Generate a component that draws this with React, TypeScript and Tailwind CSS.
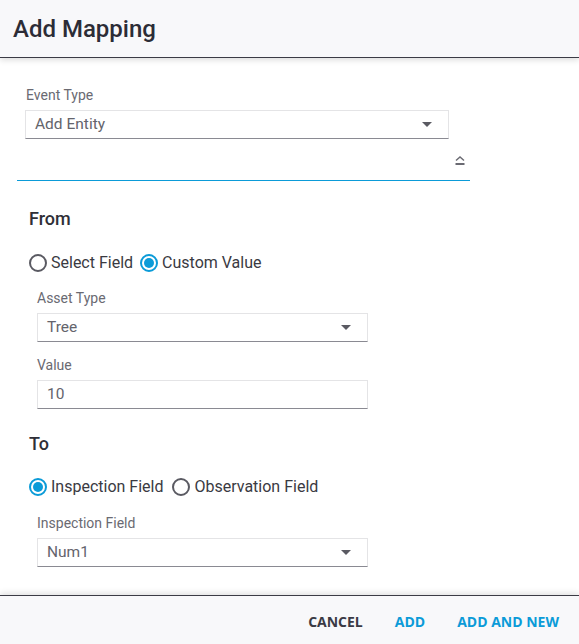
import React from "react";

const Caret = () => (
  <svg width="10" height="5" viewBox="0 0 10 5" className="shrink-0">
    <path d="M0 0 L10 0 L5 5 Z" fill="#5a5a62" />
  </svg>
);

const Select = ({ value, w }: { value: string; w: string }) => (
  <div
    className={`${w} h-[29px] flex items-center justify-between pl-[9px] pr-[16px] border border-[#e4e4e6] border-b-[#8a8a92] bg-white`}
  >
    <span className="text-[15.5px] text-[#64646c]">{value}</span>
    <Caret />
  </div>
);

const Radio = ({ checked, label }: { checked: boolean; label: string }) => (
  <label className="flex items-center gap-[4px]">
    {checked ? (
      <span className="w-[18px] h-[18px] rounded-full border-2 border-[#0b9bd8] flex items-center justify-center">
        <span className="w-[10px] h-[10px] rounded-full bg-[#0b9bd8]" />
      </span>
    ) : (
      <span className="w-[18px] h-[18px] rounded-full border-2 border-[#5a5a62]" />
    )}
    <span className="text-[16px] text-[#3a3a42]">{label}</span>
  </label>
);

const Label = ({ children }: { children: React.ReactNode }) => (
  <div className="text-[14px] leading-[16px] text-[#6a6a72] mb-[7px]">{children}</div>
);

export default function App() {
  return (
    <div
      className="w-[579px] h-[644px] flex flex-col bg-white overflow-hidden"
      style={{ fontFamily: "Roboto, 'Liberation Sans', sans-serif" }}
    >
      <header className="relative z-10 h-[58px] shrink-0 bg-[#f8f8fa] border-b border-[#3b3b45] shadow-[0_2px_6px_rgba(0,0,0,0.14)] flex items-center px-[13px]">
        <h1 className="text-[24px] font-medium text-[#2c2c36] leading-none">Add Mapping</h1>
      </header>

      <main className="flex-1 pt-[29px] pl-[17px]">
        <div className="w-[453px]">
          <div className="pl-[8px] pr-[21px]">
            <div className="pl-[1px]">
              <Label>Event Type</Label>
            </div>
            <Select value="Add Entity" w="w-full" />
          </div>
          <div className="h-[42px] border-b border-[#0b9bd8] flex items-center justify-end pr-[5px]">
            <svg width="10" height="10" viewBox="0 0 10 10" className="mt-[2px]">
              <path d="M1 4.5 L5 1 L9 4.5" stroke="#6a6a72" strokeWidth="1.4" fill="none" />
              <rect x="0.5" y="7" width="9" height="2" fill="#6a6a72" />
            </svg>
          </div>
        </div>

        <section className="pl-[12px] pt-[27px]">
          <h2 className="text-[18px] leading-[22px] font-medium text-[#2f2f37]">From</h2>
          <div className="flex items-center gap-[7px] h-[24px] mt-[21px]">
            <Radio checked={false} label="Select Field" />
            <Radio checked label="Custom Value" />
          </div>
          <div className="pl-[8px] mt-[15px]">
            <Label>Asset Type</Label>
            <Select value="Tree" w="w-[331px]" />
            <div className="mt-[15px]">
              <Label>Value</Label>
              <div className="w-[331px] h-[29px] flex items-center pl-[9px] border border-[#e4e4e6] border-b-[#8a8a92]">
                <span className="text-[15.5px] text-[#64646c]">10</span>
              </div>
            </div>
          </div>

          <h2 className="text-[18px] leading-[22px] font-medium text-[#2f2f37] mt-[24px]">To</h2>
          <div className="flex items-center gap-[9px] h-[24px] mt-[20px]">
            <Radio checked label="Inspection Field" />
            <Radio checked={false} label="Observation Field" />
          </div>
          <div className="pl-[8px] mt-[16px]">
            <Label>Inspection Field</Label>
            <Select value="Num1" w="w-[331px]" />
          </div>
        </section>
      </main>

      <footer
        className="relative z-10 h-[49px] shrink-0 bg-[#f8f8fa] border-t border-[#3b3b45] shadow-[0_-2px_6px_rgba(0,0,0,0.12)] flex items-center justify-end gap-[32px] pr-[20px] pt-[3px]"
        style={{ fontFamily: "'Open Sans', 'Liberation Sans', sans-serif" }}
      >
        <button className="text-[14px] font-bold text-[#3a3a44]">CANCEL</button>
        <button className="text-[14px] font-bold text-[#0b9bd8]">ADD</button>
        <button className="text-[14px] font-bold text-[#0b9bd8]">ADD AND NEW</button>
      </footer>
    </div>
  );
}
